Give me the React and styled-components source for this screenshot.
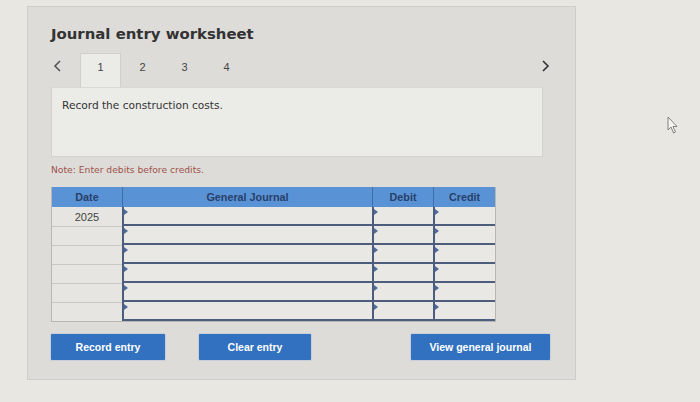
import React from "react";
import styled, { createGlobalStyle } from "styled-components";

const Global = createGlobalStyle`
  html, body { margin: 0; padding: 0; background: #e8e7e2; }
  body { width: 700px; height: 402px; overflow: hidden; font-family: "DejaVu Sans", Verdana, sans-serif; }
`;

const Page = styled.div`
  position: relative;
  width: 700px;
  height: 402px;
  padding: 6px 0 0 27px;
  box-sizing: border-box;
`;

const Panel = styled.div`
  width: 549px;
  height: 374px;
  box-sizing: border-box;
  background: #dddcd8;
  border: 1px solid #cfcecb;
  padding: 18px 0 0 23px;
`;

const Title = styled.h1`
  margin: 0;
  font-family: "DejaVu Sans", Verdana, sans-serif;
  font-weight: bold;
  font-size: 14.9px;
  line-height: 18px;
  color: #333;
`;

const TabRow = styled.div`
  display: flex;
  align-items: stretch;
  height: 34px;
  margin-top: 10px;
  width: 501px;
`;

const Arrow = styled.div`
  width: 29px;
  box-sizing: border-box;
  display: flex;
  align-items: flex-start;
  justify-content: ${p => (p.$end ? "flex-end" : "flex-start")};
  padding: 7px ${p => p.$pr || 0}px 0 ${p => p.$pl || 0}px;
  color: #444;
`;

const Tab = styled.div`
  width: 41px;
  box-sizing: border-box;
  display: flex;
  align-items: flex-start;
  justify-content: center;
  font-family: "Liberation Sans", Arial, sans-serif;
  font-size: 11px;
  color: #444;
  padding-top: 7px;
  background: ${p => (p.$active ? "#ebebe7" : "transparent")};
  border: ${p => (p.$active ? "1px solid #cfcfcb" : "1px solid transparent")};
  border-bottom: none;
  margin-right: 1px;
`;

const Spacer = styled.div`
  flex: 1;
`;

const Prompt = styled.div`
  width: 492px;
  height: 70px;
  box-sizing: border-box;
  background: #ebebe7;
  border: 1px solid #d2d2ce;
  border-top-color: #d8d8d4;
  padding: 11px 0 0 10px;
  font-size: 10.6px;
  color: #333;
`;

const Note = styled.div`
  margin-top: 7px;
  font-size: 9.2px;
  color: #a0524c;
`;

const Table = styled.div`
  margin-top: 12px;
  width: 445px;
  box-sizing: border-box;
  display: grid;
  grid-template-columns: 70px 250px 61px 62px;
  border: 1px solid #b7b6b2;
  border-top: none;
  background: #e6e5e1;
`;

const Head = styled.div`
  height: 20px;
  background: #5a93d5;
  border-left: ${p => (p.$first ? "none" : "1px solid #3f6fa8")};
  display: flex;
  align-items: center;
  justify-content: center;
  font-family: "Liberation Sans", Arial, sans-serif;
  font-weight: bold;
  font-size: 10.8px;
  color: #27406a;
`;

const DateCell = styled.div`
  height: 19px;
  box-sizing: border-box;
  border-top: ${p => (p.$first ? "none" : "1px solid #c9c8c4")};
  display: flex;
  align-items: center;
  justify-content: center;
  font-family: "Liberation Sans", Arial, sans-serif;
  font-size: 11px;
  color: #444;
`;

const InputCell = styled.div`
  position: relative;
  height: 19px;
  box-sizing: border-box;
  border-left: 2px solid #4d5d7d;
  border-bottom: 2px solid #4d5d7d;
  background: #e9e8e4;
  &::before {
    content: "";
    position: absolute;
    left: 0;
    top: 2px;
    border-left: 4px solid #4d6a9a;
    border-top: 3px solid transparent;
    border-bottom: 3px solid transparent;
  }
`;

const Buttons = styled.div`
  display: flex;
  margin-top: 12px;
  width: 499px;
`;

const Button = styled.button`
  height: 26px;
  width: ${p => p.$w}px;
  margin-left: ${p => p.$ml || 0}px;
  background: #3171bf;
  border: none;
  border-radius: 1px;
  color: #fff;
  font-family: "Liberation Sans", Arial, sans-serif;
  font-weight: bold;
  font-size: 10.5px;
  padding: 0;
  box-shadow: 0 0 0 1px #c9cfd8;
`;

const Cursor = styled.svg`
  position: absolute;
  left: 667px;
  top: 116px;
`;

const rows = [0, 1, 2, 3, 4, 5];

export default function App() {
  return (
    <>
      <Global />
      <Page>
        <Panel>
          <Title>Journal entry worksheet</Title>
          <TabRow>
            <Arrow $pl={2}>
              <svg width="9" height="12" viewBox="0 0 9 12">
                <path d="M7 1 L2 6 L7 11" fill="none" stroke="#555" strokeWidth="1.6" />
              </svg>
            </Arrow>
            <Tab $active>1</Tab>
            <Tab>2</Tab>
            <Tab>3</Tab>
            <Tab>4</Tab>
            <Spacer />
            <Arrow $end $pr={2}>
              <svg width="9" height="12" viewBox="0 0 9 12">
                <path d="M2 1 L7 6 L2 11" fill="none" stroke="#333" strokeWidth="1.6" />
              </svg>
            </Arrow>
          </TabRow>
          <Prompt>Record the construction costs.</Prompt>
          <Note>Note: Enter debits before credits.</Note>
          <Table>
            <Head $first>Date</Head>
            <Head>General Journal</Head>
            <Head>Debit</Head>
            <Head>Credit</Head>
            {rows.map(i => (
              <React.Fragment key={i}>
                <DateCell $first={i === 0}>{i === 0 ? "2025" : ""}</DateCell>
                <InputCell />
                <InputCell />
                <InputCell />
              </React.Fragment>
            ))}
          </Table>
          <Buttons>
            <Button $w={114}>Record entry</Button>
            <Button $w={112} $ml={34}>Clear entry</Button>
            <Spacer />
            <Button $w={139}>View general journal</Button>
          </Buttons>
        </Panel>
        <Cursor width="14" height="20" viewBox="0 0 14 20">
          <path d="M1 1 L1 14 L4 11 L6.5 17 L8.5 16 L6 10.5 L10 10.5 Z" fill="#f3f3f0" stroke="#777" strokeWidth="0.9" />
        </Cursor>
      </Page>
    </>
  );
}
